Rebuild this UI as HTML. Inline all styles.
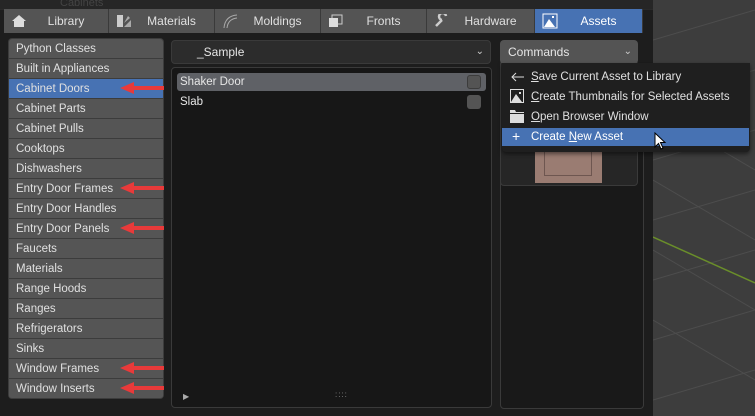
<!DOCTYPE html>
<html><head><style>
*{margin:0;padding:0;box-sizing:border-box}
body{width:755px;height:416px;overflow:hidden;background:#1d1d1d;font-family:"Liberation Sans","DejaVu Sans",sans-serif;font-size:11.5px;color:#e6e6e6;position:relative}
.abs{position:absolute}
.tab{position:absolute;top:9px;height:24px;background:#545454;border-right:1px solid #3a3a3a;line-height:25px;text-align:center;color:#e0e0e0;font-size:12px;padding-left:20px}
.tab .ic{position:absolute;left:7px;top:5px}
.row{position:absolute;left:9px;width:154px;height:20px;background:#555;border-bottom:1px solid #3c3c3c;line-height:21px;padding-left:7px;color:#e0e0e0;font-size:11.5px}
.sel{background:#4772b3}
.arrow{position:absolute;left:120px;width:44px;height:12px}
.mi{position:absolute;left:503px;width:246px;height:19px;line-height:19px;padding-left:28px;font-size:11.5px;color:#e0e0e0}
</style></head><body>
<div class="abs" style="left:0;top:0;width:755px;height:9px;background:#262626"></div>
<div class="abs" style="left:60px;top:0;width:80px;height:9px;color:#444;font-size:11px;line-height:6px">Cabinets</div>
<div class="abs" style="left:653px;top:0;width:102px;height:416px;background:#3d3d3d;overflow:hidden">
<svg width="102" height="416"><g stroke="#4d4d4d" stroke-width="1" fill="none">
<line x1="0" y1="40" x2="102" y2="10"/><line x1="0" y1="100" x2="102" y2="70"/><line x1="0" y1="160" x2="102" y2="130"/><line x1="0" y1="220" x2="102" y2="190"/><line x1="0" y1="280" x2="102" y2="250"/><line x1="0" y1="340" x2="102" y2="310"/><line x1="0" y1="400" x2="102" y2="370"/>
<line x1="0" y1="180" x2="102" y2="240"/><line x1="0" y1="250" x2="102" y2="310"/><line x1="0" y1="320" x2="102" y2="380"/><line x1="0" y1="110" x2="102" y2="170"/></g>
<line x1="0" y1="237" x2="102" y2="283" stroke="#6a8e2a" stroke-width="1.5"/></svg></div>
<div class="abs" style="left:0;top:9px;width:653px;height:407px;background:#1d1d1d;border-top:1px solid #2a2a2a"></div>
<div class="tab" style="left:4px;width:105px">Library<svg class="ic" width="16" height="14"><path d="M1 7 L8 1 L15 7 L13 7 L13 13 L3 13 L3 7Z" fill="#ddd"/></svg></div>
<div class="tab" style="left:109px;width:106px">Materials<svg class="ic" width="16" height="14"><rect x="1" y="1" width="6" height="12" fill="#ccc"/><path d="M8 13 L15 6 L15 13Z M8 9 L12 2 L14 4 Z" fill="#aaa"/></svg></div>
<div class="tab" style="left:215px;width:106px">Moldings<svg class="ic" width="16" height="14"><path d="M2 14 Q3 2 15 1 M5 14 Q6 5 15 4" stroke="#aaa" fill="none"/></svg></div>
<div class="tab" style="left:321px;width:106px">Fronts<svg class="ic" width="16" height="14"><rect x="1" y="4" width="9" height="9" fill="#ddd"/><path d="M4 4 L4 1 L14 1 L14 10 L10 10" stroke="#ccc" fill="none"/></svg></div>
<div class="tab" style="left:427px;width:108px">Hardware<svg class="ic" width="16" height="14"><path d="M2 12 L8 6 M8 6 A3.5 3.5 0 1 1 12 2" stroke="#ccc" stroke-width="2.5" fill="none"/></svg></div>
<div class="tab" style="left:535px;width:108px;background:#4772b3;color:#fff">Assets<svg class="ic" width="16" height="16" style="top:4px"><rect x="1" y="1" width="14" height="14" stroke="#fff" fill="none"/><path d="M2 14 L7 6 L13 14Z" fill="#fff"/><rect x="10" y="3" width="2" height="2" fill="#fff"/></svg></div>
<div class="abs" style="left:8px;top:38px;width:156px;height:361px;background:#3c3c3c;border-radius:4px"></div>
<div class="row" style="top:39px;border-radius:3px 3px 0 0">Python Classes</div>
<div class="row" style="top:59px">Built in Appliances</div>
<div class="row sel" style="top:79px">Cabinet Doors</div>
<div class="row" style="top:99px">Cabinet Parts</div>
<div class="row" style="top:119px">Cabinet Pulls</div>
<div class="row" style="top:139px">Cooktops</div>
<div class="row" style="top:159px">Dishwashers</div>
<div class="row" style="top:179px">Entry Door Frames</div>
<div class="row" style="top:199px">Entry Door Handles</div>
<div class="row" style="top:219px">Entry Door Panels</div>
<div class="row" style="top:239px">Faucets</div>
<div class="row" style="top:259px">Materials</div>
<div class="row" style="top:279px">Range Hoods</div>
<div class="row" style="top:299px">Ranges</div>
<div class="row" style="top:319px">Refrigerators</div>
<div class="row" style="top:339px">Sinks</div>
<div class="row" style="top:359px">Window Frames</div>
<div class="row" style="top:379px;border-radius:0 0 3px 3px">Window Inserts</div>
<svg class="arrow" style="top:82px" viewBox="0 0 44 12"><path d="M0 6 L14 0 L14 4 L44 4 L44 8 L14 8 L14 12Z" fill="#e83a3a"/></svg>
<svg class="arrow" style="top:182px" viewBox="0 0 44 12"><path d="M0 6 L14 0 L14 4 L44 4 L44 8 L14 8 L14 12Z" fill="#e83a3a"/></svg>
<svg class="arrow" style="top:222px" viewBox="0 0 44 12"><path d="M0 6 L14 0 L14 4 L44 4 L44 8 L14 8 L14 12Z" fill="#e83a3a"/></svg>
<svg class="arrow" style="top:362px" viewBox="0 0 44 12"><path d="M0 6 L14 0 L14 4 L44 4 L44 8 L14 8 L14 12Z" fill="#e83a3a"/></svg>
<svg class="arrow" style="top:382px" viewBox="0 0 44 12"><path d="M0 6 L14 0 L14 4 L44 4 L44 8 L14 8 L14 12Z" fill="#e83a3a"/></svg>
<div class="abs" style="left:171px;top:40px;width:320px;height:24px;background:#2c2c2c;border:1px solid #3a3a3a;border-radius:4px;line-height:22px;padding-left:25px;font-size:12px">_Sample<span style="position:absolute;right:6px;top:0;color:#ccc;font-size:10px">&#8964;</span></div>
<div class="abs" style="left:171px;top:67px;width:321px;height:341px;background:#171717;border:1px solid #3a3a3a;border-radius:4px"></div>
<div class="abs" style="left:177px;top:73px;width:309px;height:18px;background:#5f6166;border-radius:3px;line-height:19px;padding-left:3px;font-size:11.5px">Shaker Door</div>
<div class="abs" style="left:467px;top:75px;width:14px;height:14px;background:#545454;border:1px solid #3c3c3c;border-radius:3px"></div>
<div class="abs" style="left:180px;top:93px;font-size:11.5px;line-height:19px">Slab</div>
<div class="abs" style="left:467px;top:95px;width:14px;height:14px;background:#545454;border-radius:3px"></div>
<div class="abs" style="left:183px;top:392px;color:#aaa;font-size:8px">&#9654;</div>
<div class="abs" style="left:335px;top:390px;color:#888;font-size:8px;letter-spacing:1px">::::</div>
<div class="abs" style="left:500px;top:67px;width:144px;height:342px;background:#191919;border:1px solid #3a3a3a;border-radius:4px"></div>
<div class="abs" style="left:500px;top:60px;width:138px;height:126px;background:#262626;border:1px solid #3a3a3a;border-radius:4px"></div>
<div class="abs" style="left:535px;top:150px;width:67px;height:33px;background:#9a7c72"><div style="position:absolute;left:9px;top:0;width:48px;height:26px;border:1px solid #6e5650"></div></div>
<div class="abs" style="left:500px;top:40px;width:138px;height:24px;background:#545454;border-radius:4px;line-height:24px;padding-left:8px;font-size:12px">Commands<span style="position:absolute;right:6px;top:0;color:#ccc;font-size:10px">&#8964;</span></div>
<div class="abs" style="left:502px;top:63px;width:248px;height:89px;background:#1f1f1f;border-radius:0 0 4px 4px;box-shadow:0 2px 4px rgba(0,0,0,.5)"></div>
<div class="abs" style="left:502px;top:128px;width:247px;height:18px;background:#4772b3"></div>
<div class="mi" style="top:68px"><u>S</u>ave Current Asset to Library<svg style="position:absolute;left:8px;top:4px" width="14" height="10"><path d="M1 5 L13 5 M5 1 L1 5 L5 9" stroke="#ddd" fill="none"/></svg></div>
<div class="mi" style="top:88px"><u>C</u>reate Thumbnails for Selected Assets<svg style="position:absolute;left:7px;top:1px" width="14" height="14"><rect x=".5" y=".5" width="13" height="13" stroke="#ddd" fill="none"/><path d="M1 13 L6 5 L12 13Z" fill="#ddd"/><rect x="9" y="3" width="2" height="2" fill="#ddd"/></svg></div>
<div class="mi" style="top:108px"><u>O</u>pen Browser Window<svg style="position:absolute;left:7px;top:2px" width="14" height="13"><path d="M0 0 L5 0 L6 2 L14 2 L14 3 L0 3Z M0 4 L14 4 L14 13 L0 13Z" fill="#ddd"/></svg></div>
<div class="mi" style="top:128px;color:#fff">Create <u>N</u>ew Asset<span style="position:absolute;left:9px;top:-1px;font-size:14px">+</span></div>
<svg class="abs" style="left:654px;top:132px" width="14" height="20"><path d="M1 1 L1 15 L4.5 11.5 L7 17 L9 16 L6.5 10.5 L11 10.5Z" fill="#fff" stroke="#000"/></svg>
</body></html>
